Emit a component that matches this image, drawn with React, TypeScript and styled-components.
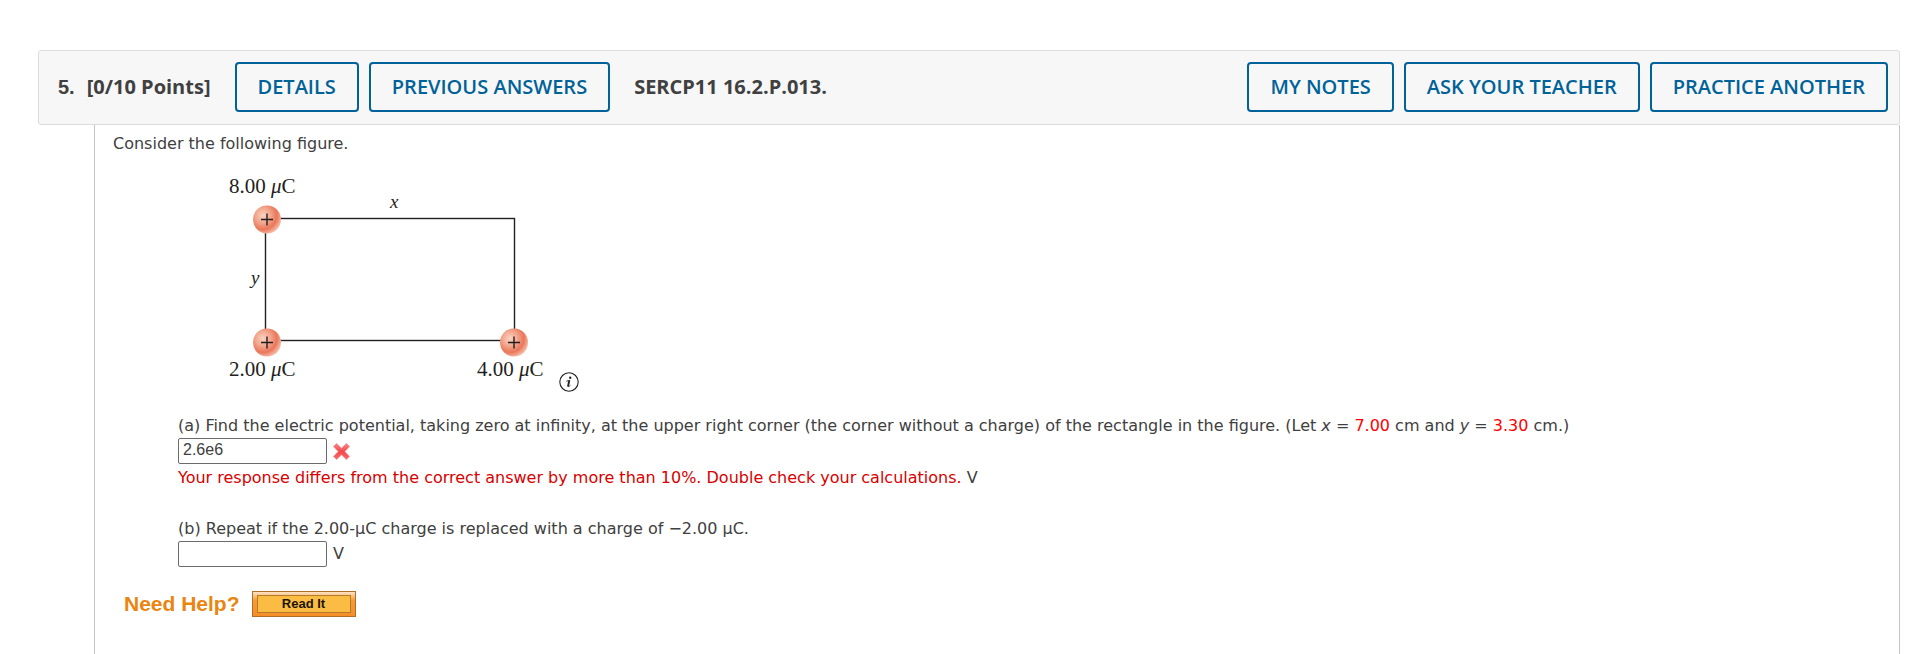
import React from "react";
import styled, { createGlobalStyle } from "styled-components";

const Global = createGlobalStyle`
  *, *::before, *::after { box-sizing: border-box; }
  body {
    margin: 0;
    background: #fff;
    color: #404040;
    font: 16px/20px Verdana, "DejaVu Sans", sans-serif;
  }
  #root { display: flex; min-height: 100vh; }
`;

const Page = styled.main`
  flex: 1;
  display: flex;
  flex-direction: column;
  padding: 50px 20px 0 38px;
`;

const Header = styled.header`
  display: flex;
  align-items: center;
  gap: 10px;
  padding: 11px 11px 12px 19px;
  background: #f7f7f7;
  border: 1px solid #dcdcdc;
  border-radius: 3px;
  font: 600 20px/24px "Open Sans", sans-serif;
`;

const QuestionNumber = styled.span`
  font: bold 20px/24px "Liberation Sans", Arial, sans-serif;
`;

const Points = styled.span`
  margin: 0 14px 0 2px;
  font-weight: 700;
`;

const QuestionCode = styled.span`
  margin: 0 auto 0 14px;
  font-weight: 700;
`;

const OutlineButton = styled.button`
  height: 50px;
  padding: 0 21px;
  border: 2px solid #006298;
  border-radius: 4px;
  background: transparent;
  color: #006298;
  font: inherit;
  white-space: nowrap;
  cursor: pointer;
`;

const Body = styled.section`
  flex: 1;
  margin-left: 56px;
  padding: 9px 18px 36px;
  border: solid #c4c4c4;
  border-width: 0 1px;
`;

const Text = styled.p`
  margin: 0;
`;

const Figure = styled.figure`
  display: flex;
  align-items: flex-end;
  gap: 11px;
  margin: 18px 0 24px 115px;
`;

const Drawing = styled.svg`
  display: block;
  font-family: "Liberation Serif", "Times New Roman", serif;
  font-size: 21px;
  fill: #231f20;
`;

const InfoButton = styled.button`
  padding: 0;
  border: 0;
  background: none;
  cursor: pointer;
  svg { display: block; }
`;

const Part = styled.div`
  margin-left: 65px;
  & + & { margin-top: 31px; }
`;

const Prompt = styled.label`
  display: block;
`;

const AnswerRow = styled.div`
  display: flex;
  align-items: center;
  gap: 6px;
  margin: 2px 0 4px;
`;

const AnswerInput = styled.input`
  width: 149px;
  height: 26px;
  padding: 0 4px 2px;
  border: 1px solid #6b6b6b;
  border-radius: 2px;
  background: #fff;
  color: #404040;
  font: 16px/20px "Liberation Sans", Arial, sans-serif;
`;

const Value = styled.span`
  color: #f00;
`;

const Feedback = styled.span`
  color: #d90000;
`;

const Help = styled.div`
  display: flex;
  align-items: center;
  gap: 12px;
  margin: 24px 0 0 11px;
`;

const HelpTitle = styled.span`
  color: #ea8511;
  font: bold 21px/24px "Liberation Sans", Arial, sans-serif;
`;

const ReadButton = styled.button`
  width: 104px;
  height: 26px;
  padding: 3px 4px;
  border: 1px solid #b06f28;
  background: linear-gradient(#fde3c4, #f79a35 35%, #f58f27);
  color: #1c1400;
  font: bold 13px/16px "Liberation Sans", Arial, sans-serif;
  cursor: pointer;
`;

const ReadLabel = styled.span`
  display: block;
  border: 1px solid #b57a2c;
  background: #fbbc44;
`;

const charges = [
  { cx: 39, cy: 47, label: "8.00", tx: 1, ty: 21 },
  { cx: 39, cy: 170, label: "2.00", tx: 1, ty: 204 },
  { cx: 286, cy: 170, label: "4.00", tx: 249, ty: 204 },
];

function ChargeFigure() {
  return (
    <Drawing width="320" height="220" viewBox="0 0 320 220" role="img" aria-label="Rectangle with charges at three corners">
      <defs>
        <radialGradient id="charge" cx="0.36" cy="0.36" r="0.66">
          <stop offset="0" stopColor="#fbd3c2" />
          <stop offset="0.4" stopColor="#f3a78f" />
          <stop offset="0.75" stopColor="#e9775a" />
          <stop offset="1" stopColor="#f5b5a0" />
        </radialGradient>
      </defs>
      <rect x="37.5" y="46.5" width="249" height="122" fill="none" stroke="#231f20" strokeWidth="1.4" />
      {charges.map((c) => (
        <g key={c.label}>
          <circle cx={c.cx} cy={c.cy + 0.5} r="14" fill="url(#charge)" />
          <path d={`M${c.cx - 6} ${c.cy + 0.5}h12M${c.cx} ${c.cy - 5.5}v12`} stroke="#231f20" strokeWidth="1.4" />
          <text x={c.tx} y={c.ty}>
            {c.label} <tspan fontStyle="italic">μ</tspan>C
          </text>
        </g>
      ))}
      <text x="162" y="36" fontSize="19" fontStyle="italic">x</text>
      <text x="23" y="112" fontSize="19" fontStyle="italic">y</text>
    </Drawing>
  );
}

function InfoIcon() {
  return (
    <svg width="20" height="20" viewBox="0 0 20 20" aria-hidden="true">
      <circle cx="10" cy="10" r="9.2" fill="#fff" stroke="#222" strokeWidth="1.1" />
      <path d="M7.4 9.1L10.8 8.4L9.4 14.2Q9.3 14.9 10 14.5L11.4 13.2" fill="none" stroke="#222" strokeWidth="0.9" />
      <path d="M9.2 8.9L11 8.4L9.7 14.6H8Z" fill="#222" />
      <circle cx="11.2" cy="5.7" r="1.2" fill="#222" />
    </svg>
  );
}

function WrongIcon() {
  return (
    <svg width="17" height="17" viewBox="0 0 17 17" role="img" aria-label="Incorrect">
      <defs>
        <linearGradient id="wrong" x1="0" y1="0" x2="0" y2="1">
          <stop offset="0" stopColor="#fb8585" />
          <stop offset="0.5" stopColor="#f4494d" />
          <stop offset="1" stopColor="#f76a6a" />
        </linearGradient>
      </defs>
      <path d="M3.6 .6L8.5 5.2L13.4 .6L16.4 3.6L11.8 8.5L16.4 13.4L13.4 16.4L8.5 11.8L3.6 16.4L.6 13.4L5.2 8.5L.6 3.6Z" fill="url(#wrong)" stroke="#f98080" strokeWidth="0.8" strokeLinejoin="round" />
    </svg>
  );
}

export default function App() {
  return (
    <>
      <Global />
      <Page>
        <Header>
          <QuestionNumber>5.</QuestionNumber>
          <Points>[0/10 Points]</Points>
          <OutlineButton>DETAILS</OutlineButton>
          <OutlineButton>PREVIOUS ANSWERS</OutlineButton>
          <QuestionCode>SERCP11 16.2.P.013.</QuestionCode>
          <OutlineButton>MY NOTES</OutlineButton>
          <OutlineButton>ASK YOUR TEACHER</OutlineButton>
          <OutlineButton>PRACTICE ANOTHER</OutlineButton>
        </Header>
        <Body>
          <Text>Consider the following figure.</Text>
          <Figure>
            <ChargeFigure />
            <InfoButton aria-label="Figure information">
              <InfoIcon />
            </InfoButton>
          </Figure>
          <Part>
            <Prompt htmlFor="answer-a">
              (a) Find the electric potential, taking zero at infinity, at the upper right corner (the corner without a
              charge) of the rectangle in the figure. (Let <i>x</i> = <Value>7.00</Value> cm and <i>y</i> ={" "}
              <Value>3.30</Value> cm.)
            </Prompt>
            <AnswerRow>
              <AnswerInput id="answer-a" defaultValue="2.6e6" />
              <WrongIcon />
            </AnswerRow>
            <Text>
              <Feedback>
                Your response differs from the correct answer by more than 10%. Double check your calculations.
              </Feedback>{" "}
              V
            </Text>
          </Part>
          <Part>
            <Prompt htmlFor="answer-b">
              (b) Repeat if the 2.00-µC charge is replaced with a charge of −2.00 µC.
            </Prompt>
            <AnswerRow>
              <AnswerInput id="answer-b" />
              <span>V</span>
            </AnswerRow>
          </Part>
          <Help>
            <HelpTitle>Need Help?</HelpTitle>
            <ReadButton>
              <ReadLabel>Read It</ReadLabel>
            </ReadButton>
          </Help>
        </Body>
      </Page>
    </>
  );
}
